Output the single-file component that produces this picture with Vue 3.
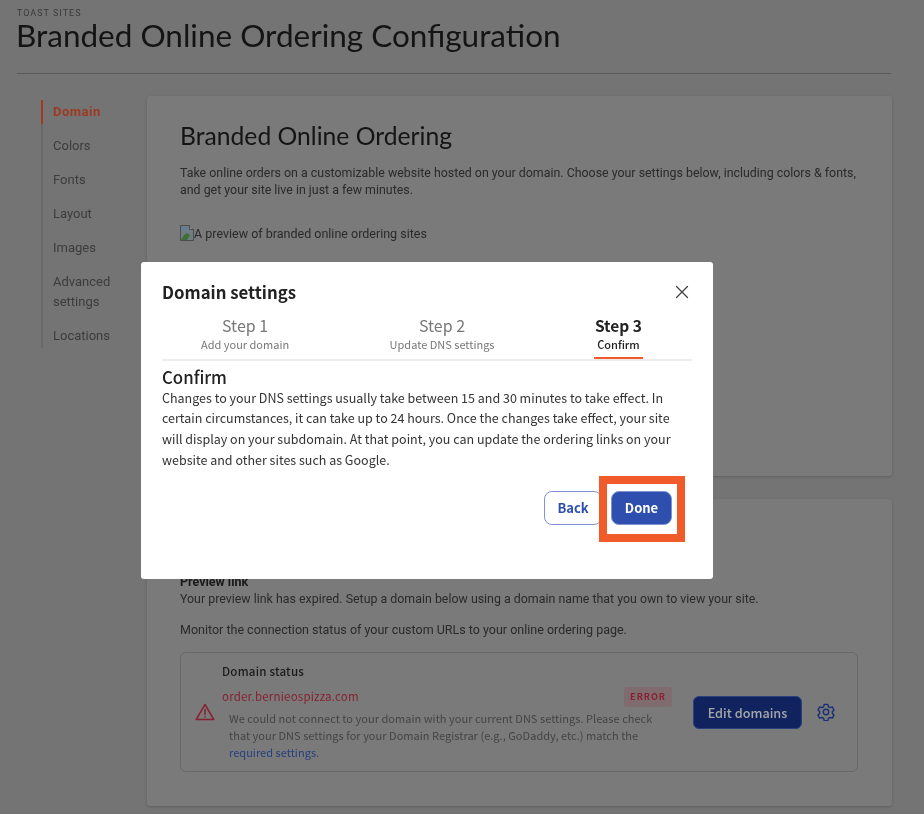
<script setup>
const navItems = [
  { label: 'Domain', active: true },
  { label: 'Colors' },
  { label: 'Fonts' },
  { label: 'Layout' },
  { label: 'Images' },
  { label: 'Advanced settings' },
  { label: 'Locations' }
]

const steps = [
  { title: 'Step 1', sub: 'Add your domain' },
  { title: 'Step 2', sub: 'Update DNS settings' },
  { title: 'Step 3', sub: 'Confirm', active: true }
]
</script>

<template>
  <div class="page">
    <header class="head">
      <p class="eyebrow">TOAST SITES</p>
      <h1>Branded Online Ordering Configuration</h1>
    </header>

    <div class="body">
      <nav class="side">
        <a v-for="item in navItems" :key="item.label" :class="{ active: item.active }">{{ item.label }}</a>
      </nav>

      <main class="content">
        <section class="card intro">
          <h2>Branded Online Ordering</h2>
          <p>Take online orders on a customizable website hosted on your domain. Choose your settings below, including colors &amp; fonts, and get your site live in just a few minutes.</p>
          <div class="broken">
            <svg width="14" height="16" viewBox="0 0 14 16">
              <path d="M.5.5h9l4 4v11H.5z" fill="#707c84" stroke="#4c4c4c" />
              <path d="M9.5.5v4h4" fill="#8c8c8c" stroke="#4c4c4c" />
              <path d="M1 15l3-5 3-2 3 2-3 5z" fill="#3f6f35" />
              <path d="M2 2h5v4H2z" fill="#5f7f9a" />
            </svg>
            <span>A preview of branded online ordering sites</span>
          </div>
        </section>

        <section class="card domain">
          <h3>Preview link</h3>
          <p class="expired">Your preview link has expired. Setup a domain below using a domain name that you own to view your site.</p>
          <p class="monitor">Monitor the connection status of your custom URLs to your online ordering page.</p>
          <div class="status">
            <svg class="warn" width="20" height="18" viewBox="0 0 20 18" fill="none" stroke="#862232" stroke-width="1.5" stroke-linejoin="round" stroke-linecap="round">
              <path d="M10 1.5L18.8 16.5H1.2z" />
              <path d="M10 6.5v5M10 13.8v.2" />
            </svg>
            <div class="status-text">
              <h4>Domain status</h4>
              <div class="url-row">
                <span class="url">order.bernieospizza.com</span>
                <span class="badge">ERROR</span>
              </div>
              <p>We could not connect to your domain with your current DNS settings. Please check that your DNS settings for your Domain Registrar (e.g., GoDaddy, etc.) match the <a>required settings</a>.</p>
            </div>
            <button class="edit">Edit domains</button>
            <svg class="gear" width="18" height="18" viewBox="0 0 24 24" fill="none" stroke="#1a2f73" stroke-width="1.9" stroke-linejoin="round">
              <path d="M9.6 1.8h4.8l.7 3 2.3 1.3 3-.9 2.3 4.1-2.2 2.1v2.6l2.2 2.1-2.3 4.1-3-.9-2.3 1.3-.7 3H9.6l-.7-3-2.3-1.3-3 .9-2.3-4.1 2.2-2.1v-2.6L1.3 9.3l2.3-4.1 3 .9 2.3-1.3z" />
              <circle cx="12" cy="12" r="3.6" />
            </svg>
          </div>
        </section>
      </main>
    </div>

    <div class="modal">
      <div class="modal-head">
        <h2>Domain settings</h2>
        <svg width="14" height="14" viewBox="0 0 14 14" stroke="#444" stroke-width="1.3" stroke-linecap="round">
          <path d="M1.5 1.5l11 11M12.5 1.5l-11 11" />
        </svg>
      </div>

      <div class="steps">
        <div v-for="step in steps" :key="step.title" class="step" :class="{ active: step.active }">
          <strong>{{ step.title }}</strong>
          <span>{{ step.sub }}</span>
        </div>
      </div>

      <h3>Confirm</h3>
      <p>Changes to your DNS settings usually take between 15 and 30 minutes to take effect. In certain circumstances, it can take up to 24 hours. Once the changes take effect, your site will display on your subdomain. At that point, you can update the ordering links on your website and other sites such as Google.</p>

      <div class="actions">
        <button class="back">Back</button>
        <div class="done-wrap">
          <button class="done">Done</button>
          <span class="highlight"></span>
        </div>
      </div>
    </div>
  </div>
</template>

<style scoped>
.page {
  position: relative;
  width: 924px;
  height: 814px;
  overflow: hidden;
  background: #747474;
  font-family: Roboto, sans-serif;
  color: #1d1d1d;
  filter: blur(0.4px);
}

.head {
  margin: 0 33px 0 17px;
  padding-top: 8px;
  height: 74px;
  box-sizing: border-box;
  border-bottom: 1px solid #5a5a5a;
}

.eyebrow {
  margin: 0 0 1px;
  font-size: 9px;
  line-height: 10px;
  letter-spacing: 1px;
  color: #3a3a3a;
}

h1 {
  margin: 0 0 0 -1px;
  font-family: Lato, sans-serif;
  font-weight: 400;
  font-size: 31.5px;
  line-height: 32px;
  color: #141414;
}

.body {
  display: flex;
  padding: 22px 33px 0 41px;
}

.side {
  width: 106px;
  flex: none;
  align-self: flex-start;
  display: flex;
  flex-direction: column;
  gap: 10px;
  box-sizing: border-box;
  border-left: 2px solid #696969;
  margin-top: 4px;
  padding: 0;
}

.side a {
  display: block;
  margin-left: -2px;
  padding: 2px 20px 2px 10px;
  border-left: 2px solid transparent;
  font-size: 13px;
  line-height: 20px;
  color: #3c3c3c;
}

.side a.active {
  border-left-color: #a03a20;
  color: #9c3a22;
  font-weight: 700;
  letter-spacing: 0.5px;
}

.content {
  flex: 1;
  display: flex;
  flex-direction: column;
  gap: 23px;
}

.card {
  background: #7a7a7a;
  border-radius: 3px;
  box-shadow: 0 1px 3px rgba(0, 0, 0, 0.18);
  box-sizing: border-box;
  padding: 0 34px 0 33px;
}

.intro {
  height: 380px;
  padding-top: 25px;
}

.intro h2 {
  margin: 0;
  font-family: Lato, sans-serif;
  font-weight: 400;
  font-size: 24.7px;
  line-height: 30px;
  color: #141414;
}

.intro p {
  margin: 12.5px 0 0;
  font-size: 12.4px;
  line-height: 17px;
  color: #2a2a2a;
}

.broken {
  display: flex;
  align-items: center;
  margin-top: 27px;
  font-size: 12.5px;
  line-height: 17px;
  color: #2a2a2a;
}

.domain {
  height: 307px;
  padding-top: 74px;
  font-size: 12.5px;
  line-height: 17px;
  color: #2a2a2a;
}

.domain h3 {
  margin: 0;
  font-size: 12.5px;
  font-weight: 700;
  line-height: 17px;
  color: #1a1a1a;
}

.domain > p {
  margin: 0;
}

.domain .expired {
  font-size: 12.4px;
}

.domain .monitor {
  margin-top: 14px;
}

.status {
  display: flex;
  align-items: center;
  margin-top: 14px;
  height: 120px;
  box-sizing: border-box;
  padding: 0 22px 0 14px;
  border: 1px solid #686868;
  border-radius: 6px;
}

.warn {
  flex: none;
}

.status-text {
  flex: none;
  width: 450px;
  margin: -1px 0 0 7px;
  font-family: 'Noto Sans CJK SC', sans-serif;
}

.status-text h4 {
  margin: 0 0 7px;
  font-size: 11.6px;
  font-weight: 500;
  line-height: 17px;
  letter-spacing: 0.2px;
  color: #1a1a1a;
}

.url-row {
  display: flex;
  align-items: center;
  justify-content: space-between;
  height: 20px;
}

.url {
  font-size: 11.5px;
  letter-spacing: 0.2px;
  color: #862232;
}

.badge {
  padding: 2px 6px;
  border-radius: 3px;
  background: #806c6e;
  font-size: 9px;
  line-height: 16px;
  font-weight: 700;
  letter-spacing: 1px;
  color: #862232;
}

.status-text p {
  margin: 3px 0 0 7px;
  font-size: 11px;
  line-height: 17px;
  letter-spacing: 0.03px;
  color: #444;
}

.status-text a {
  color: #24407f;
}

.edit {
  flex: none;
  margin-left: 21px;
  width: 109px;
  height: 33px;
  border: 1px solid #29417f;
  border-radius: 6px;
  background: #10235f;
  font-family: 'Noto Sans CJK SC', sans-serif;
  font-size: 12.7px;
  font-weight: 500;
  color: #a8a8a8;
}

.gear {
  flex: none;
  margin-left: 15px;
}

.modal {
  position: absolute;
  left: 141px;
  top: 262px;
  width: 572px;
  height: 317px;
  box-sizing: border-box;
  padding: 0 21px;
  background: #fff;
  border-radius: 3px;
  font-family: 'Noto Sans CJK SC', sans-serif;
  color: #222;
}

.modal-head {
  display: flex;
  align-items: center;
  justify-content: space-between;
  height: 50px;
  padding: 5px 3px 0 0;
}

.modal-head h2 {
  margin: 0;
  font-size: 16.8px;
  font-weight: 700;
  color: #222;
}

.steps {
  display: flex;
  justify-content: space-between;
  height: 42px;
  padding: 0 50px 0 39px;
  border-bottom: 2px solid #ededed;
}

.step {
  display: flex;
  flex-direction: column;
  align-items: center;
  position: relative;
  color: #777;
}

.step strong {
  font-size: 16px;
  font-weight: 400;
  line-height: 16px;
}

.step span {
  margin-top: 3px;
  font-size: 11px;
  line-height: 16px;
}

.step.active {
  color: #222;
}

.step.active strong {
  font-size: 15.5px;
  font-weight: 700;
}

.step.active span {
  font-weight: 500;
}

.step.active::after {
  content: '';
  position: absolute;
  left: -1px;
  right: -1px;
  bottom: 0;
  height: 2px;
  background: #f15a29;
}

.modal h3 {
  margin: 6px 0 0;
  font-size: 16.8px;
  line-height: 20.5px;
  font-weight: 500;
}

.modal p {
  margin: 0;
  font-size: 12.5px;
  line-height: 20.7px;
  color: #333;
}

.actions {
  display: flex;
  justify-content: flex-end;
  align-items: center;
  gap: 9px;
  margin-top: 21px;
  padding-right: 20px;
}

.actions button {
  height: 34px;
  padding: 0 0 2px;
  border-radius: 8px;
  font-family: 'Noto Sans CJK SC', sans-serif;
  font-size: 13px;
  font-weight: 700;
}

.back {
  width: 58px;
  background: #fff;
  border: 1.5px solid #7f93d6;
  color: #2f4fae;
}

.done-wrap {
  position: relative;
  display: flex;
}

.done {
  width: 61px;
  background: #2f4fae;
  border: 1px solid #7f93d6;
  color: #fff;
}

.highlight {
  position: absolute;
  left: -12px;
  top: -15px;
  width: 86px;
  height: 66px;
  box-sizing: border-box;
  border: 8px solid #f15a29;
}
</style>

<style>
html, body {
  margin: 0;
  background: #747474;
}
</style>
